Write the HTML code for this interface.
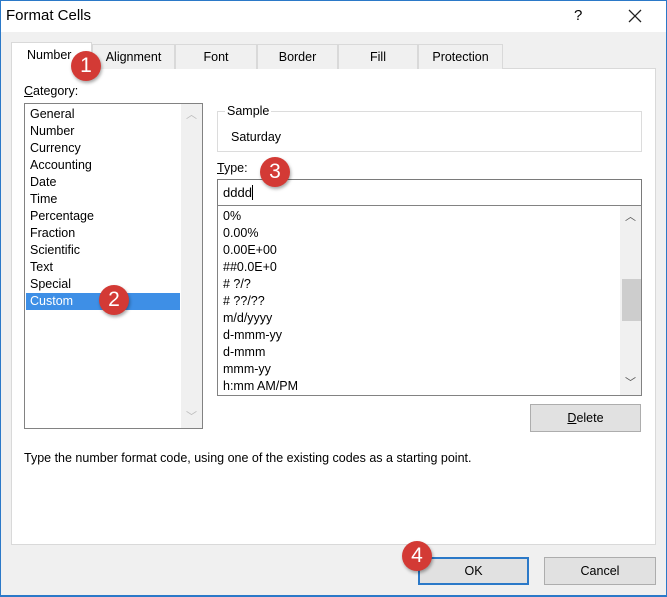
<!DOCTYPE html>
<html><head><style>
*{box-sizing:border-box;margin:0;padding:0}
body{width:667px;height:597px;position:relative;background:#f0f0f0;font-family:"Liberation Sans",sans-serif;font-size:12.5px;color:#000;overflow:hidden}
.a{position:absolute}
.win{left:0;top:0;width:667px;height:597px;border:1px solid #2b79c8;border-bottom:2px solid #2b79c8}
.title{left:1px;top:1px;width:665px;height:31px;background:#fff}
.tab{position:absolute;top:44px;height:25px;border:1px solid #d9d9d9;border-bottom:none;background:#f0f0f0;text-align:center;line-height:24px}
.panel{left:11px;top:68px;width:645px;height:477px;background:#fff;border:1px solid #d9d9d9}
.li{position:absolute;left:5px;height:17px;line-height:17px}
.badge{position:absolute;z-index:5;width:30px;height:30px;border-radius:50%;background:#d33a35;color:#fff;font-size:21px;text-align:center;line-height:30px;box-shadow:1px 2px 3px rgba(0,0,0,.35)}
.btn{position:absolute;background:#e1e1e1;border:1px solid #adadad;text-align:center}
</style></head><body>
<div class="a title"></div>
<div class="a" style="left:6px;top:7px;font-size:15px">Format Cells</div>
<div class="a" style="left:574px;top:7px;font-size:15px">?</div>
<svg class="a" style="left:628px;top:9px" width="14" height="14"><path d="M1 1L13 13M13 1L1 13" stroke="#222" stroke-width="1.3"/></svg>
<div class="a panel"></div>
<div class="tab" style="left:11px;width:81px;top:42px;height:27px;background:#fff;z-index:2;text-align:left;padding-left:15px">Number</div>
<div class="tab" style="left:92px;width:83px">Alignment</div>
<div class="tab" style="left:175px;width:82px">Font</div>
<div class="tab" style="left:257px;width:81px">Border</div>
<div class="tab" style="left:338px;width:80px">Fill</div>
<div class="tab" style="left:418px;width:85px">Protection</div>
<div class="a" style="left:24px;top:84px"><u>C</u>ategory:</div>
<div class="a" style="left:24px;top:103px;width:179px;height:326px;border:1px solid #828282;background:#fff">
<div class="a" style="right:0;top:0;width:21px;height:324px;background:#f0f0f0"></div>
<div class="a" style="right:5px;top:2px;color:#bbb;font-size:11px">︿</div>
<div class="a" style="right:5px;top:304px;color:#bbb;font-size:11px">﹀</div>
<div class="li" style="top:2px">General</div><div class="li" style="top:19px">Number</div><div class="li" style="top:36px">Currency</div><div class="li" style="top:53px">Accounting</div><div class="li" style="top:70px">Date</div><div class="li" style="top:87px">Time</div><div class="li" style="top:104px">Percentage</div><div class="li" style="top:121px">Fraction</div><div class="li" style="top:138px">Scientific</div><div class="li" style="top:155px">Text</div><div class="li" style="top:172px">Special</div>
<div class="li" style="top:189px;left:1px;width:154px;background:#3e8fe6;color:#fff;padding-left:4px">Custom</div>
</div>
<div class="a" style="left:217px;top:111px;width:425px;height:41px;border:1px solid #dcdcdc"></div>
<div class="a" style="left:225px;top:104px;background:#fff;padding:0 2px">Sample</div>
<div class="a" style="left:231px;top:130px">Saturday</div>
<div class="a" style="left:217px;top:161px"><u>T</u>ype:</div>
<div class="a" style="left:217px;top:179px;width:425px;height:27px;border:1px solid #7a7a7a;background:#fff;padding:5px 0 0 5px;font-size:13px">dddd<span style="border-left:1px solid #000"></span></div>
<div class="a" style="left:217px;top:205px;width:425px;height:191px;border:1px solid #828282;background:#fff">
<div class="a" style="right:0;top:0;width:21px;height:189px;background:#f0f0f0"></div>
<div class="a" style="right:0;top:73px;width:19px;height:42px;background:#cdcdcd"></div>
<div class="a" style="right:5px;top:2px;color:#555;font-size:11px">︿</div>
<div class="a" style="right:5px;top:168px;color:#555;font-size:11px">﹀</div>
<div class="li" style="top:2px">0%</div><div class="li" style="top:19px">0.00%</div><div class="li" style="top:36px">0.00E+00</div><div class="li" style="top:53px">##0.0E+0</div><div class="li" style="top:70px"># ?/?</div><div class="li" style="top:87px"># ??/??</div><div class="li" style="top:104px">m/d/yyyy</div><div class="li" style="top:121px">d-mmm-yy</div><div class="li" style="top:138px">d-mmm</div><div class="li" style="top:155px">mmm-yy</div><div class="li" style="top:172px">h:mm AM/PM</div>
</div>
<div class="btn" style="left:530px;top:404px;width:111px;height:28px;line-height:26px"><u>D</u>elete</div>
<div class="a" style="left:24px;top:451px">Type the number format code, using one of the existing codes as a starting point.</div>
<div class="btn" style="left:418px;top:557px;width:111px;height:28px;line-height:24px;border:2px solid #2b79c8">OK</div>
<div class="btn" style="left:544px;top:557px;width:112px;height:28px;line-height:26px">Cancel</div>
<div class="badge" style="left:71px;top:51px">1</div>
<div class="badge" style="left:99px;top:285px">2</div>
<div class="badge" style="left:260px;top:157px">3</div>
<div class="badge" style="left:402px;top:541px">4</div>
<div class="a win"></div>
</body></html>
